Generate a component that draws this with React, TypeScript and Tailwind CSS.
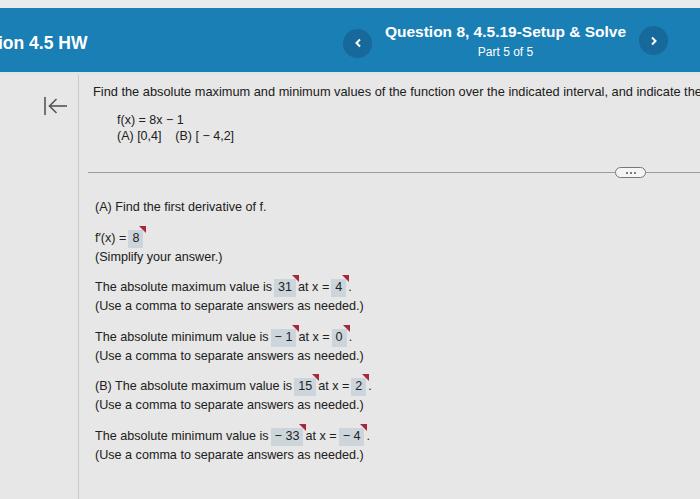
import React from "react";

function Mark() {
  return (
    <svg className="absolute -top-[4px] -right-[3px]" width="7" height="7" viewBox="0 0 7 7">
      <polygon points="0,0 7,0 7,7" fill="#a8283a" />
    </svg>
  );
}

function Box({ v }: { v: string }) {
  return (
    <span className="relative inline-flex items-center justify-center h-[18px] bg-[#cdd5dc] text-[#222] px-[4px] mx-[2px] align-middle">
      {v}
      <Mark />
    </span>
  );
}

function Row({ children }: { children: React.ReactNode }) {
  return <div className="h-[19px] leading-[19px] flex items-center whitespace-nowrap">{children}</div>;
}

export default function App() {
  return (
    <div
      className="w-[700px] h-[499px] overflow-hidden bg-[#e6e7e6] text-[#202020] flex flex-col"
      style={{ fontFamily: '"Liberation Sans", Arial, sans-serif' }}
    >
      <div className="h-[8px] bg-[#e8ebeb] shrink-0" />
      <header className="h-[67px] shrink-0 bg-[#1a7fb5] flex items-center text-white border-b-[3px] border-[#dfe6e8] pt-[6px]">
        <div className="w-[343px] overflow-hidden shrink-0">
          <span className="block -ml-[39px] text-[17.5px] font-bold whitespace-nowrap">Section 4.5 HW</span>
        </div>
        <button className="w-[29px] h-[29px] rounded-full bg-[#17689b] flex items-center justify-center shrink-0">
          <svg width="8" height="10" viewBox="0 0 8 10">
            <polyline points="6,1.5 2.5,5 6,8.5" fill="none" stroke="white" strokeWidth="2" />
          </svg>
        </button>
        <div className="flex-1 flex flex-col items-center -mt-[4px]">
          <div className="text-[15.5px] font-bold leading-[20px] whitespace-nowrap">Question 8, 4.5.19-Setup &amp; Solve</div>
          <div className="text-[12px] leading-[16px] mt-[2px]">Part 5 of 5</div>
        </div>
        <button className="w-[29px] h-[29px] rounded-full bg-[#17689b] flex items-center justify-center shrink-0 mr-[32px] -mt-[5px]">
          <svg width="8" height="10" viewBox="0 0 8 10">
            <polyline points="2,1.5 5.5,5 2,8.5" fill="none" stroke="white" strokeWidth="2" />
          </svg>
        </button>
      </header>
      <div className="flex flex-1">
        <aside className="w-[79px] shrink-0 border-r border-[#c9cac9] flex justify-end pr-[11px] pt-[22px]">
          <svg width="23" height="18" viewBox="0 0 23 18">
            <line x1="1" y1="0" x2="1" y2="18" stroke="#555" strokeWidth="1.6" />
            <line x1="5" y1="9" x2="23" y2="9" stroke="#555" strokeWidth="1.6" />
            <polyline points="12.5,2 5.5,9 12.5,16" fill="none" stroke="#555" strokeWidth="1.6" />
          </svg>
        </aside>
        <main className="flex-1 min-w-0 pt-[9px] text-[12.6px]">
          <div className="pl-[14px] leading-[16px] whitespace-nowrap text-[12.8px]">
            Find the absolute maximum and minimum values of the function over the indicated interval, and indicate the x-values at which they occur.
          </div>
          <div className="pl-[38px] mt-[12px] text-[12.5px] leading-[16px]">
            <div>f(x) = 8x − 1</div>
            <div className="whitespace-pre">(A) [0,4]    (B) [ − 4,2]</div>
          </div>
          <div className="ml-[9px] mt-[23px] flex items-center">
            <div className="flex-1 h-px bg-[#9a9b9b]" />
            <div className="w-[31px] h-[11px] rounded-full border border-[#777] bg-[#f4f4f4] flex items-center justify-center gap-[2px]">
              <span className="w-[2px] h-[2px] bg-[#555] rounded-full" />
              <span className="w-[2px] h-[2px] bg-[#555] rounded-full" />
              <span className="w-[2px] h-[2px] bg-[#555] rounded-full" />
            </div>
            <div className="w-[54px] h-px bg-[#9a9b9b]" />
          </div>
          <div className="pl-[16px] mt-[20px]">
            <Row>(A) Find the first derivative of f.</Row>
            <div className="mt-[12px]">
              <Row>
                f′(x) = <Box v="8" />
              </Row>
              <Row>(Simplify your answer.)</Row>
            </div>
            <div className="mt-[11px]">
              <Row>
                The absolute maximum value is <Box v="31" /> at x = <Box v="4" />.
              </Row>
              <Row>(Use a comma to separate answers as needed.)</Row>
            </div>
            <div className="mt-[12px]">
              <Row>
                The absolute minimum value is <Box v="− 1" /> at x = <Box v="0" />.
              </Row>
              <Row>(Use a comma to separate answers as needed.)</Row>
            </div>
            <div className="mt-[11px]">
              <Row>
                (B) The absolute maximum value is <Box v="15" /> at x = <Box v="2" />.
              </Row>
              <Row>(Use a comma to separate answers as needed.)</Row>
            </div>
            <div className="mt-[12px]">
              <Row>
                The absolute minimum value is <Box v="− 33" /> at x = <Box v="− 4" />.
              </Row>
              <Row>(Use a comma to separate answers as needed.)</Row>
            </div>
          </div>
        </main>
      </div>
    </div>
  );
}
